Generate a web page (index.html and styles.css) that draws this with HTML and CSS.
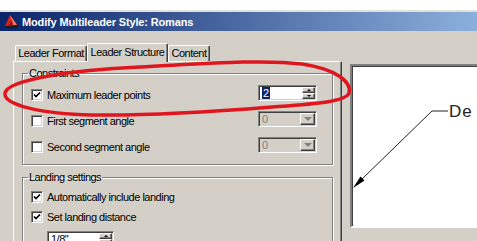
FILE: index.html
```html
<!DOCTYPE html>
<html lang="en">
<head>
    <meta charset="UTF-8">
    <meta name="viewport" content="width=device-width, initial-scale=1.0">
    <title>Modify Multileader Style</title>
    <link rel="stylesheet" href="styles.css">
</head>
<body>
    <div class="window">
        <div class="titlebar">
            <svg class="app-icon" width="13" height="13" viewBox="0 0 13 13">
                <rect x="0" y="9" width="13" height="4" fill="#1c1c1c"/>
                <polygon points="0,11 5,0 12,10" fill="#d8231b"/>
                <polygon points="5,0 12,10 8,10" fill="#f2786a"/>
                <polygon points="3,11 7,5 8,11" fill="#9c1610"/>
            </svg>
            <span class="title">Modify Multileader Style: Romans</span>
        </div>

        <div class="client">
            <div class="left">
                <div class="tabs">
                    <div class="tab tab-format">Leader Format</div>
                    <div class="tab tab-structure active">Leader Structure</div>
                    <div class="tab tab-content">Content</div>
                </div>

                <div class="panel">
                    <fieldset class="group constraints">
                        <legend>Constraints</legend>
                        <div class="rows">
                            <div class="row">
                                <label class="check"><span class="box checked"></span>Maximum leader points</label>
                                <div class="spin">
                                    <span class="value"><span class="sel">2</span></span>
                                    <span class="spin-btns"><span class="up"></span><span class="down"></span></span>
                                </div>
                            </div>
                            <div class="row">
                                <label class="check"><span class="box"></span>First segment angle</label>
                                <div class="combo disabled">
                                    <span class="value">0</span>
                                    <span class="drop"></span>
                                </div>
                            </div>
                            <div class="row">
                                <label class="check"><span class="box"></span>Second segment angle</label>
                                <div class="combo disabled">
                                    <span class="value">0</span>
                                    <span class="drop"></span>
                                </div>
                            </div>
                        </div>
                    </fieldset>

                    <fieldset class="group landing">
                        <legend>Landing settings</legend>
                        <div class="rows tight">
                            <div class="row">
                                <label class="check"><span class="box checked"></span>Automatically include landing</label>
                            </div>
                            <div class="row">
                                <label class="check"><span class="box checked"></span>Set landing distance</label>
                            </div>
                            <div class="row indent">
                                <div class="spin wide">
                                    <span class="value">1/8"</span>
                                    <span class="spin-btns"><span class="up"></span><span class="down"></span></span>
                                </div>
                            </div>
                        </div>
                    </fieldset>
                </div>
            </div>

            <div class="preview">
                <svg width="136" height="160" viewBox="352 66 136 160">
                    <line x1="432" y1="111" x2="448" y2="111" stroke="#222" stroke-width="1"/>
                    <line x1="432" y1="111" x2="361" y2="180" stroke="#222" stroke-width="1"/>
                    <polygon points="353,188 364.5,180.5 360.5,176.5" fill="#000"/>
                    <text x="449" y="117" class="preview-text">De</text>
                </svg>
            </div>
        </div>
    </div>

    <!-- red hand-drawn markup over the dialog -->
    <svg class="markup" width="477" height="241" viewBox="0 0 477 241">
        <path d="M5,93 C8,80 70,70 140,67 C200,64 262,59 302,64 C336,69 352,82 349,93 C346,102 312,104 272,107 C222,111 152,116 92,115 C42,114 3,105 5,93 Z"
              fill="none" stroke="#e0161f" stroke-width="3.5"/>
    </svg>
</body>
</html>
```

FILE: styles.css
```css
body {
    margin: 0;
    width: 477px;
    height: 241px;
    overflow: hidden;
    position: relative;
    background-color: #fff;
    font-family: "Liberation Sans", Arial, sans-serif;
    font-size: 11px;
    letter-spacing: -0.5px;
    color: #000;
}
.window {
    margin-top: 10px;
    height: 229px;
    border-top: 2px solid #e2e0dc;
    background-color: #d4d0c8;
    overflow: hidden;
}
.titlebar {
    height: 19px;
    display: flex;
    align-items: center;
    gap: 4px;
    padding-left: 5px;
    background: linear-gradient(to right, #0a246a, #8cb0dc);
    color: #fff;
    font-weight: bold;
    letter-spacing: -0.15px;
}
.app-icon {
    flex: none;
}
.client {
    display: flex;
    padding: 12px 0 0 13px;
}
.left {
    width: 329px;
    flex: none;
}

/* tabs */
.tabs {
    display: flex;
    align-items: flex-end;
    height: 18px;
    padding-left: 2px;
}
.tab {
    box-sizing: border-box;
    height: 16px;
    border: 1px solid #fff;
    border-bottom: none;
    border-right-color: #404040;
    border-radius: 2px 2px 0 0;
    box-shadow: inset -1px 0 #808080;
    background-color: #d4d0c8;
    text-align: center;
    line-height: 15px;
}
.tab.active {
    height: 19px;
    margin-bottom: -1px;
    position: relative;
    z-index: 1;
    line-height: 16px;
}
.tab-format {
    width: 72px;
}
.tab-structure {
    width: 81px;
}
.tab-content {
    width: 42px;
}
.panel {
    box-sizing: border-box;
    height: 200px;
    border-top: 1px solid #fff;
    border-left: 1px solid #fff;
    border-right: 1px solid #404040;
    box-shadow: inset -1px 0 #808080;
    padding: 5px 8px 0;
}

/* group boxes */
.group {
    margin: 0;
    min-width: 0;
    padding: 5px 8px 11px;
    border: 1px solid #808080;
    box-shadow: inset 1px 1px #fff, 1px 1px #fff;
}
.group legend {
    padding: 0 1px;
    margin-left: -3px;
    line-height: 13px;
}
.constraints .check {
    margin-top: 4px;
}
.landing {
    margin-top: 6px;
    padding-top: 5px;
}
.rows {
    display: flex;
    flex-direction: column;
    gap: 10px;
}
.rows.tight {
    gap: 4px;
}
.row {
    display: flex;
    align-items: center;
    justify-content: space-between;
    height: 16px;
    padding-right: 7px;
}
.row.indent {
    margin-top: 2px;
    padding-left: 16px;
    justify-content: flex-start;
}
.check {
    display: flex;
    align-items: center;
    gap: 4px;
}
.box {
    box-sizing: border-box;
    width: 12px;
    height: 12px;
    border: 1px solid;
    border-color: #808080 #fff #fff #808080;
    box-shadow: inset 1px 1px #404040, inset -1px -1px #d4d0c8;
    background-color: #fff;
}
.box.checked {
    background-image: url("data:image/svg+xml,%3Csvg xmlns='http://www.w3.org/2000/svg' width='10' height='10' viewBox='0 0 10 10'%3E%3Cpolyline points='2,4.5 4,6.5 8,2.5' fill='none' stroke='%23000' stroke-width='1.7'/%3E%3C/svg%3E");
    background-repeat: no-repeat;
    background-position: center;
}

/* edit controls */
.spin, .combo {
    box-sizing: border-box;
    width: 59px;
    height: 16px;
    display: flex;
    border: 1px solid;
    border-color: #808080 #fff #fff #808080;
    box-shadow: inset 1px 1px #404040, inset -1px -1px #d4d0c8;
    padding: 1px 1px 1px 2px;
    background-color: #fff;
}
.spin.wide {
    width: 67px;
}
.value {
    flex: 1;
    line-height: 12px;
    padding-left: 1px;
}
.sel {
    background-color: #0a246a;
    color: #fff;
    padding: 0 1px;
}
.spin-btns {
    width: 13px;
    display: flex;
    flex-direction: column;
}
.spin-btns span, .drop {
    box-sizing: border-box;
    display: flex;
    align-items: center;
    justify-content: center;
    border: 1px solid;
    border-color: #fff #404040 #404040 #fff;
    box-shadow: inset -1px -1px #808080;
    background-color: #d4d0c8;
}
.spin-btns span {
    flex: 1;
}
.spin-btns .up::after {
    content: "";
    border-left: 2px solid transparent;
    border-right: 2px solid transparent;
    border-bottom: 2px solid #000;
}
.spin-btns .down::after {
    content: "";
    border-left: 2px solid transparent;
    border-right: 2px solid transparent;
    border-top: 2px solid #000;
}
.combo.disabled {
    background-color: #d4d0c8;
}
.combo.disabled .value {
    color: #808080;
}
.drop {
    width: 15px;
}
.drop::after {
    content: "";
    border-left: 4px solid transparent;
    border-right: 4px solid transparent;
    border-top: 4px solid #808080;
}

/* preview */
.preview {
    flex: none;
    box-sizing: border-box;
    width: 140px;
    height: 164px;
    margin: 21px 0 0 8px;
    border: 2px solid;
    border-color: #808080 #fff #fff #808080;
    box-shadow: inset 1px 1px #404040;
    background-color: #fff;
}
.preview svg {
    display: block;
}
.preview-text {
    font-family: "Liberation Sans", Arial, sans-serif;
    font-size: 17px;
    letter-spacing: 1px;
    fill: #222;
}
.markup {
    position: absolute;
    top: 0;
    left: 0;
    pointer-events: none;
}
```
